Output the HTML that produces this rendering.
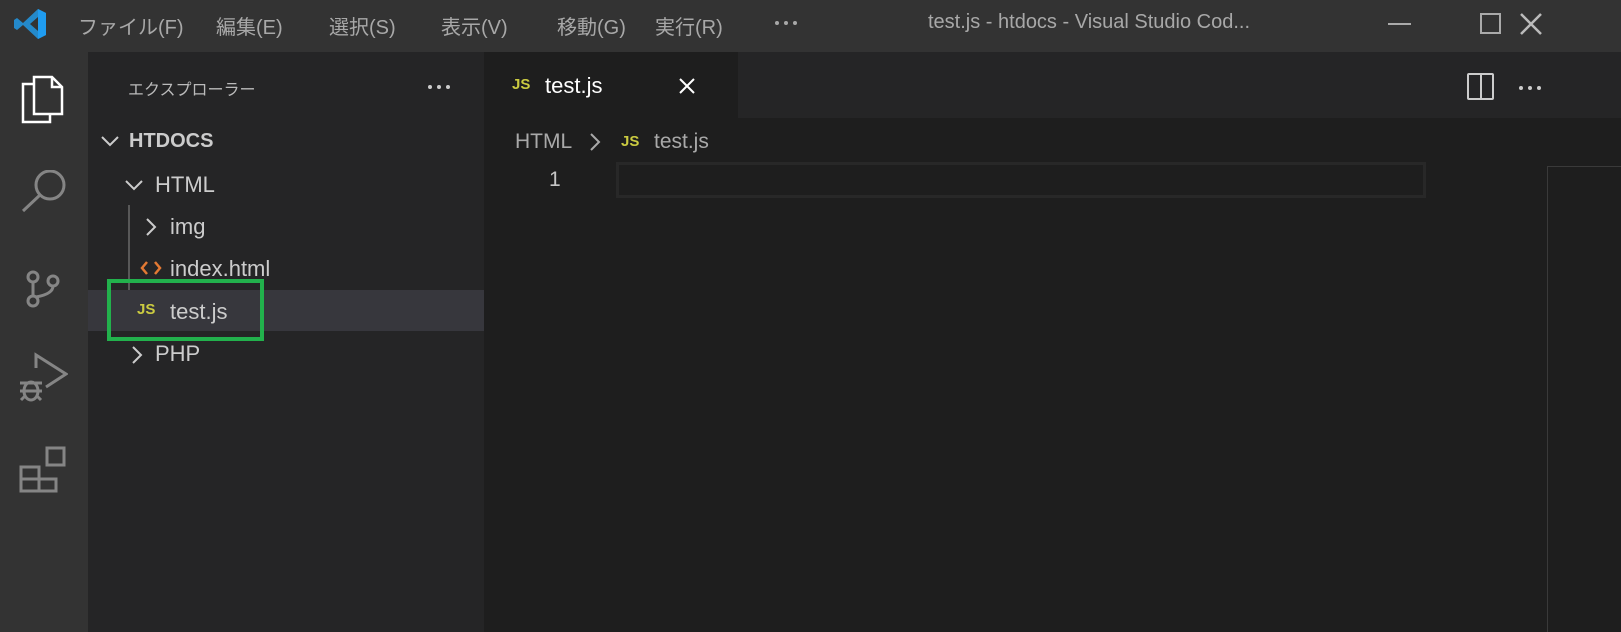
<!DOCTYPE html><html><head><meta charset="utf-8"><style>
*{margin:0;padding:0;box-sizing:border-box}
body{width:1621px;height:632px;background:#1e1e1e;position:relative;overflow:hidden;font-family:"Liberation Sans","Noto Sans CJK JP",sans-serif}
.a{position:absolute;white-space:nowrap}
.m{top:11px;font-size:20px;color:#a8a8a8}
.t{font-size:22px;color:#cccccc}
.js{font-family:"Liberation Sans",sans-serif;font-weight:bold;color:#cbcb41;font-size:15px}
</style></head><body>
<div class="a" style="left:0;top:0;width:1621px;height:52px;background:#333333"></div>
<svg class="a" style="left:12px;top:6px" width="36" height="36" viewBox="0 0 36 36"><path d="M26 3 L34 7 V29 L26 33 L11 19 L5 24 L2 22 V14 L5 12 L11 17 Z M26 11 L18 18 L26 25 Z" fill="#2489ca"/><path d="M26 3 L34 7 V29 L26 33Z" fill="#1f9cf0"/></svg>
<div class="a m" style="left:78px">ファイル(F)</div>
<div class="a m" style="left:216px">編集(E)</div>
<div class="a m" style="left:329px">選択(S)</div>
<div class="a m" style="left:441px">表示(V)</div>
<div class="a m" style="left:557px">移動(G)</div>
<div class="a m" style="left:655px">実行(R)</div>
<svg class="a" style="left:772px;top:19px" width="30" height="8"><circle cx="5" cy="4" r="2" fill="#a8a8a8"/><circle cx="14" cy="4" r="2" fill="#a8a8a8"/><circle cx="23" cy="4" r="2" fill="#a8a8a8"/></svg>
<div class="a m" style="left:928px">test.js - htdocs - Visual Studio Cod...</div>
<div class="a" style="left:1388px;top:23px;width:23px;height:2px;background:#aaa"></div>
<div class="a" style="left:1480px;top:13px;width:21px;height:21px;border:2px solid #aaa"></div>
<svg class="a" style="left:1518px;top:11px" width="26" height="26"><path d="M3 3L23 23M23 3L3 23" stroke="#bbb" stroke-width="2.5"/></svg>

<div class="a" style="left:0;top:52px;width:88px;height:580px;background:#333333"></div>
<svg class="a" style="left:18px;top:74px" width="50" height="52" viewBox="0 0 50 52" fill="none" stroke="#fff" stroke-width="2.5"><path d="M16 10 H5 V48 H32 V40"/><path d="M16 3 H34 L44 13 V40 H16 Z"/><path d="M34 3 V13 H44"/></svg>
<svg class="a" style="left:20px;top:170px" width="48" height="48" fill="none" stroke="#858585" stroke-width="3"><circle cx="30" cy="15" r="14"/><path d="M20 25 L3 41"/></svg>
<svg class="a" style="left:24px;top:270px" width="40" height="40" fill="none" stroke="#858585" stroke-width="3"><circle cx="9" cy="7" r="5"/><circle cx="9" cy="31" r="5"/><circle cx="29" cy="11" r="5"/><path d="M9 12V26M29 16Q29 24 12 27"/></svg>
<svg class="a" style="left:18px;top:350px" width="50" height="52" fill="none" stroke="#858585" stroke-width="3"><path d="M18 18 V5 L48 24 L28 37"/><ellipse cx="13" cy="41" rx="7" ry="9"/><path d="M2 33H24M2 41H24M3 50L7 46M23 50L19 46"/></svg>
<svg class="a" style="left:18px;top:445px" width="50" height="50" fill="none" stroke="#858585" stroke-width="3"><rect x="3" y="22" width="18" height="24"/><path d="M3 34H38V46H21V22"/><rect x="29" y="3" width="17" height="17"/></svg>

<div class="a" style="left:88px;top:52px;width:396px;height:580px;background:#252526"></div>
<div class="a" style="left:128px;top:76px;font-size:16px;color:#bbb">エクスプローラー</div>
<svg class="a" style="left:426px;top:83px" width="30" height="8"><circle cx="4" cy="4" r="2" fill="#ccc"/><circle cx="13" cy="4" r="2" fill="#ccc"/><circle cx="22" cy="4" r="2" fill="#ccc"/></svg>
<svg class="a" style="left:100px;top:134px" width="20" height="14"><path d="M2 3L10 11L18 3" stroke="#ccc" stroke-width="2" fill="none"/></svg>
<div class="a" style="left:129px;top:130px;font-size:20px;font-weight:bold;color:#ccc">HTDOCS</div>
<svg class="a" style="left:124px;top:178px" width="20" height="14"><path d="M2 3L10 11L18 3" stroke="#ccc" stroke-width="2" fill="none"/></svg>
<div class="a t" style="left:155px;top:172px">HTML</div>
<div class="a" style="left:128px;top:205px;width:2px;height:126px;background:#585858"></div>
<div class="a" style="left:88px;top:290px;width:396px;height:41px;background:#37373d"></div>
<svg class="a" style="left:144px;top:217px" width="14" height="20"><path d="M3 2L11 10L3 18" stroke="#ccc" stroke-width="2" fill="none"/></svg>
<div class="a t" style="left:170px;top:214px">img</div>
<svg class="a" style="left:140px;top:260px" width="22" height="16"><path d="M7 2L2 8L7 14M15 2L20 8L15 14" stroke="#e37933" stroke-width="2.5" fill="none"/></svg>
<div class="a t" style="left:170px;top:256px">index.html</div>
<div class="a js" style="left:137px;top:301px">JS</div>
<div class="a t" style="left:170px;top:299px">test.js</div>
<svg class="a" style="left:130px;top:345px" width="14" height="20"><path d="M3 2L11 10L3 18" stroke="#ccc" stroke-width="2" fill="none"/></svg>
<div class="a t" style="left:155px;top:341px">PHP</div>
<div class="a" style="left:107px;top:279px;width:157px;height:62px;border:4px solid #22b14c"></div>

<div class="a" style="left:484px;top:52px;width:1137px;height:66px;background:#252526"></div>
<div class="a" style="left:484px;top:52px;width:254px;height:66px;background:#1e1e1e"></div>
<div class="a js" style="left:512px;top:76px">JS</div>
<div class="a" style="left:545px;top:73px;font-size:22px;color:#fff">test.js</div>
<svg class="a" style="left:677px;top:76px" width="20" height="20"><path d="M3 3L17 17M17 3L3 17" stroke="#fff" stroke-width="2"/></svg>
<div class="a" style="left:1467px;top:73px;width:27px;height:27px;border:2px solid #ccc;border-radius:2px"></div>
<div class="a" style="left:1480px;top:74px;width:2px;height:25px;background:#ccc"></div>
<svg class="a" style="left:1517px;top:84px" width="30" height="8"><circle cx="4" cy="4" r="2" fill="#ccc"/><circle cx="13" cy="4" r="2" fill="#ccc"/><circle cx="22" cy="4" r="2" fill="#ccc"/></svg>

<div class="a" style="left:515px;top:130px;font-size:21px;color:#a9a9a9">HTML</div>
<svg class="a" style="left:588px;top:132px" width="14" height="20"><path d="M3 2L11 10L3 18" stroke="#a9a9a9" stroke-width="2" fill="none"/></svg>
<div class="a js" style="left:621px;top:133px">JS</div>
<div class="a" style="left:654px;top:130px;font-size:21px;color:#a9a9a9">test.js</div>
<div class="a" style="left:549px;top:168px;font-size:21px;color:#c6c6c6">1</div>
<div class="a" style="left:616px;top:162px;width:810px;height:36px;border:3px solid #282828"></div>
<div class="a" style="left:1547px;top:166px;width:74px;height:466px;border-left:1px solid #3a3a3a;border-top:1px solid #3a3a3a"></div>
</body></html>
